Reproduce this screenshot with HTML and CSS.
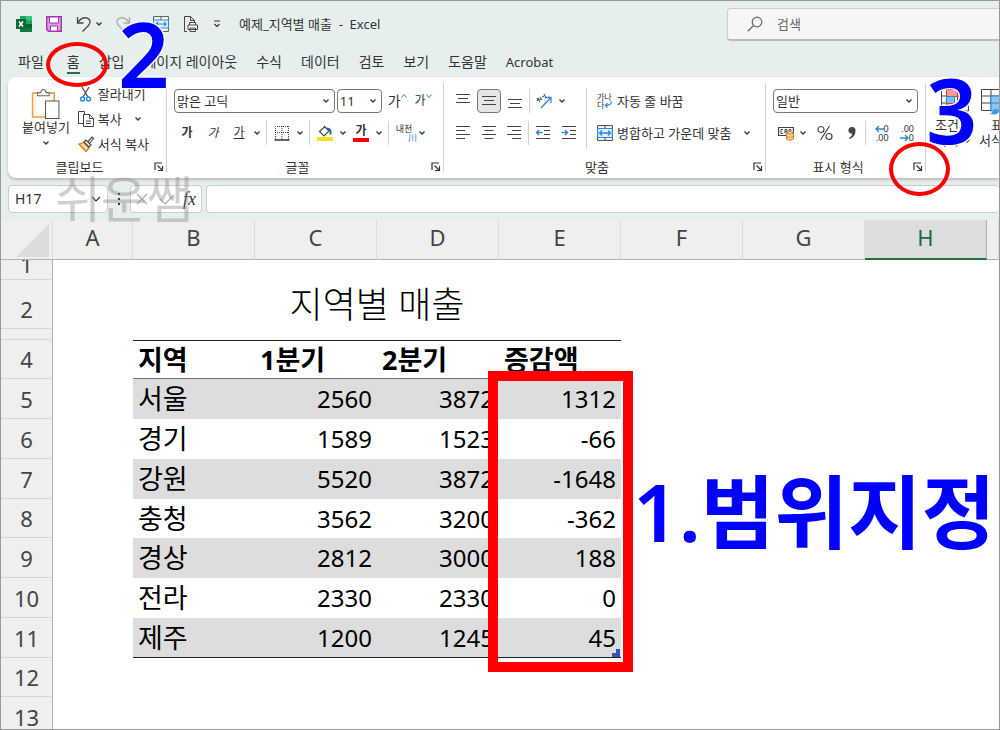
FILE: index.html
```html
<!DOCTYPE html>
<html lang="ko">
<head>
  <meta charset="UTF-8">
  <meta name="viewport" content="width=device-width, initial-scale=1.0">
  <title>예제_지역별 매출 - Excel</title>
  <link rel="stylesheet" href="styles.css">
</head>
<body>
  <svg class="defs" aria-hidden="true">
    <symbol id="chev" viewBox="0 0 8 8"><path d="M1.5 2.5 4 5l2.500-2.500" fill="none" stroke="#333" stroke-width="1.300"/></symbol>
    <symbol id="launch" viewBox="0 0 10 10"><path d="M1 8V1h7M3.500 3.500 8 8M8.500 4v4.500H4" fill="none" stroke="#333" stroke-width="1.200"/></symbol>
  </svg>

  <header class="titlebar">
    <div class="quick">
      <svg class="icon" viewBox="0 0 16 16"><path d="M4 0h12v16H4z" fill="#21a366"/><path d="M4 8h12v8H4z" fill="#107c41"/><path d="M10 0h6v4h-6z" fill="#33c481"/><path d="M10 8h6v4h-6z" fill="#185c37"/><path d="M0 3h10v10H0z" fill="#0e6b38"/><path d="m3 5.500 4 5M7 5.500l-4 5" stroke="#fff" stroke-width="1.500"/></svg>
      <button aria-label="저장"><svg class="icon" viewBox="0 0 16 16"><path d="M.7.700h14.600v14.600H2.500L.7 13.500z" fill="#dd9be4" stroke="#a237b0" stroke-width="1.400"/><path d="M3.500 1h9v6h-9zM4.500 10h7v5h-7z" fill="#fff" stroke="#a237b0"/></svg></button>
      <button class="undo" aria-label="실행 취소"><svg class="icon" viewBox="0 0 16 16"><path d="M1.500 1v6h6M1.500 7C4 3 7 1.500 10 1.800c4 .4 5.500 4.700 2.500 7.700L6.500 15.500" fill="none" stroke="#444" stroke-width="1.300"/></svg><svg class="chev"><use href="#chev"/></svg></button>
      <button class="redo" aria-label="다시 실행"><svg class="icon" viewBox="0 0 16 16"><path d="M14.500 1v6h-6M14.500 7C12 3 9 1.500 6 1.800c-4 .4-5.500 4.700-2.500 7.700l6 6" fill="none" stroke="#aaa" stroke-width="1.300"/></svg></button>
      <button aria-label="병합"><svg class="icon" viewBox="0 0 16 16"><path d="M.6.600h14.800v14.800H.6zM8 .6V4M8 12v3.400" fill="#fff" stroke="#555"/><path d="M.6 4h14.800v8H.6z" fill="#e3f1fc" stroke="#2b88d8"/><path d="M3 8h10M5 6 3 8l2 2M11 6l2 2-2 2" fill="none" stroke="#2b88d8" stroke-width="1.200"/></svg></button>
      <button aria-label="인쇄 미리 보기"><svg class="icon" viewBox="0 0 16 16"><path d="M4 15.500H1.500V.5h6l4 4V6M7.500.500v4h4" fill="none" stroke="#444"/><path d="M6.500 9V6.500h6V9M5 13.500v-4.500h9.500v4.500zM7 12h5.500v3.500H7z" fill="#fff" stroke="#444"/></svg></button>
      <button aria-label="사용자 지정"><svg class="chev" viewBox="0 0 8 8"><path d="M1 1h6M1.500 4 4 6.500 6.500 4" fill="none" stroke="#333" stroke-width="1.200"/></svg></button>
    </div>
    <h1 class="doc-name">예제_지역별 매출&nbsp; -&nbsp; Excel</h1>
    <label class="search">
      <svg class="icon" viewBox="0 0 16 16"><circle cx="10" cy="6" r="4.800" fill="none" stroke="#666" stroke-width="1.200"/><path d="M6.500 9.500.8 15.200" stroke="#666" stroke-width="1.300"/></svg>
      <input type="search" placeholder="검색" aria-label="검색">
    </label>
  </header>

  <nav class="tabs">
    <a href="#">파일</a>
    <a href="#" class="active">홈</a>
    <a href="#">삽입</a>
    <a href="#">페이지 레이아웃</a>
    <a href="#">수식</a>
    <a href="#">데이터</a>
    <a href="#">검토</a>
    <a href="#">보기</a>
    <a href="#">도움말</a>
    <a href="#" class="latin">Acrobat</a>
  </nav>

  <div class="ribbon">
    <section class="group clipboard">
      <div class="tools">
        <button class="big">
          <svg class="paste" viewBox="0 0 28 29"><path d="M1 4h21v23H1z" fill="#fff" stroke="#e8a33d" stroke-width="1.500"/><path d="M2.500 5.500h18v20h-18z" fill="#fdf3dc"/><path d="M4.500 7h14v17h-14z" fill="#fff"/><path d="M6 6.500v-3h3c0-4 5-4 5 0h3v3z" fill="#fff" stroke="#666"/><path d="M13.500 11.500h13v17h-13z" fill="#fff" stroke="#555"/></svg>
          <span>붙여넣기</span>
          <svg class="chev"><use href="#chev"/></svg>
        </button>
        <div class="stack">
          <button><svg class="icon" viewBox="0 0 16 16"><path d="M4 1l6 10M11 1 5 11" stroke="#444" stroke-width="1.200"/><circle cx="4.500" cy="13" r="2" fill="none" stroke="#2b88d8" stroke-width="1.400"/><circle cx="10.500" cy="13" r="2" fill="none" stroke="#2b88d8" stroke-width="1.400"/></svg>잘라내기</button>
          <button><svg class="icon" viewBox="0 0 16 16"><path d="M5 12.500H.5V.5h6V3" fill="none" stroke="#444"/><path d="M5.500 3.500h6l4 4v8h-10zM11.500 3.500v4h4M8 10h5M8 12.500h5" fill="#fff" stroke="#444"/></svg>복사<svg class="chev far"><use href="#chev"/></svg></button>
          <button><svg class="icon" viewBox="0 0 16 16"><path d="m1 8 5-1.500L11 12l-3 3.500z" fill="#fbd59b" stroke="#d9791a" stroke-width="1.300"/><path d="m6 6 2-2 5 5-2 2zM10 5.500 14 1l1.500 1.500L12 7" fill="#fff" stroke="#444" stroke-width="1.200"/></svg>서식 복사</button>
        </div>
      </div>
      <footer><span>클립보드</span><button aria-label="클립보드 옵션"><svg class="launch"><use href="#launch"/></svg></button></footer>
    </section>

    <section class="group font">
      <div class="tools rows">
        <div class="row">
          <label class="combo font-name"><select aria-label="글꼴 이름"><option>맑은 고딕</option></select><svg class="chev"><use href="#chev"/></svg></label>
          <label class="combo font-size"><select aria-label="글꼴 크기"><option>11</option></select><svg class="chev"><use href="#chev"/></svg></label>
          <button class="tool grow" aria-label="크게">가<svg class="caret" viewBox="0 0 6 4"><path d="m.5 3.500 2.500-3 2.500 3" fill="none" stroke="#2b88d8"/></svg></button>
          <button class="tool" aria-label="작게">가<svg class="caret" viewBox="0 0 6 4"><path d="m.5.500 2.500 3 2.500-3" fill="none" stroke="#2b88d8"/></svg></button>
        </div>
        <div class="row">
          <button class="tool bold">가</button>
          <button class="tool italic">가</button>
          <button class="tool under">가</button>
          <button class="drop" aria-label="밑줄 종류"><svg class="chev"><use href="#chev"/></svg></button>
          <i class="sep"></i>
          <button class="tool" aria-label="테두리"><svg class="icon" viewBox="0 0 16 16"><path d="M1 1.500h14M1 7.500h14M1.500 1v14M8 1v14M14.500 1v14" fill="none" stroke="#444" stroke-dasharray="1 1"/><path d="M.5 15h15" stroke="#333" stroke-width="1.500"/></svg></button>
          <button class="drop" aria-label="테두리 종류"><svg class="chev"><use href="#chev"/></svg></button>
          <i class="sep"></i>
          <button class="tool" aria-label="채우기 색"><svg class="icon" viewBox="0 0 16 16"><path d="m7 1 5 5-5 5-4.500-4.500L8 1.500" fill="#fff" stroke="#444" stroke-width="1.200"/><path d="M10 3.500c3 0 4 2 3.500 6" fill="none" stroke="#1b66b0" stroke-width="2"/><path d="M0 12h16v4H0z" fill="#ffe11a"/></svg></button>
          <button class="drop" aria-label="채우기 색 선택"><svg class="chev"><use href="#chev"/></svg></button>
          <button class="tool color">가</button>
          <button class="drop" aria-label="글꼴 색 선택"><svg class="chev"><use href="#chev"/></svg></button>
          <i class="sep"></i>
          <button class="tool phonetic"><span>내천</span><b>川</b></button>
          <button class="drop" aria-label="윗주"><svg class="chev"><use href="#chev"/></svg></button>
        </div>
      </div>
      <footer><span>글꼴</span><button aria-label="글꼴 옵션"><svg class="launch"><use href="#launch"/></svg></button></footer>
    </section>

    <section class="group align">
      <div class="tools">
        <div class="rows">
          <div class="row">
            <button class="tool" aria-label="위쪽 맞춤"><svg class="icon" viewBox="0 0 16 16"><path d="M1 1.500h14M3 5.500h10M1 9.500h14" stroke="#444" stroke-width="1.200"/></svg></button>
            <button class="tool on" aria-label="가운데 맞춤"><svg class="icon" viewBox="0 0 16 16"><path d="M1 3.500h14M3 7.500h10M1 11.500h14" stroke="#444" stroke-width="1.200"/></svg></button>
            <button class="tool" aria-label="아래쪽 맞춤"><svg class="icon" viewBox="0 0 16 16"><path d="M1 6.500h14M3 10.500h10M1 14.500h14" stroke="#444" stroke-width="1.200"/></svg></button>
            <i class="sep tight"></i>
            <button class="tool" aria-label="방향"><svg class="icon" viewBox="0 0 16 16"><path d="M5 15 14.500 5M9.500 4.500h5.500V10" fill="none" stroke="#2b88d8" stroke-width="1.300"/><path d="m1 5 3 4M1 8l2-3M4 4l2 3M6 4l2-1M8 1l2 4M3 7l2-1" fill="none" stroke="#444"/></svg></button>
            <button class="drop" aria-label="방향 선택"><svg class="chev"><use href="#chev"/></svg></button>
          </div>
          <div class="row">
            <button class="tool" aria-label="왼쪽"><svg class="icon" viewBox="0 0 16 16"><path d="M1 1.500h14M1 5.500h9M1 9.500h14M1 13.500h9" stroke="#444" stroke-width="1.200"/></svg></button>
            <button class="tool" aria-label="가운데"><svg class="icon" viewBox="0 0 16 16"><path d="M1 1.500h14M3.500 5.500h9M1 9.500h14M3.500 13.500h9" stroke="#444" stroke-width="1.200"/></svg></button>
            <button class="tool" aria-label="오른쪽"><svg class="icon" viewBox="0 0 16 16"><path d="M1 1.500h14M6 5.500h9M1 9.500h14M6 13.500h9" stroke="#444" stroke-width="1.200"/></svg></button>
            <i class="sep tight"></i>
            <button class="tool" aria-label="내어쓰기"><svg class="icon" viewBox="0 0 16 16"><path d="M1 1.500h14M9 5.500h6M9 9.500h6M1 13.500h14" stroke="#444" stroke-width="1.200"/><path d="M7.500 7.500H1.500M4 5 1.500 7.500 4 10" fill="none" stroke="#2b88d8" stroke-width="1.500"/></svg></button>
            <button class="tool" aria-label="들여쓰기"><svg class="icon" viewBox="0 0 16 16"><path d="M1 1.500h14M9 5.500h6M9 9.500h6M1 13.500h14" stroke="#444" stroke-width="1.200"/><path d="M.5 7.500h6M4 5 6.500 7.500 4 10" fill="none" stroke="#2b88d8" stroke-width="1.500"/></svg></button>
          </div>
        </div>
        <i class="sep tall"></i>
        <div class="rows">
          <button class="wide"><span class="wrap-icon" aria-hidden="true">가나<br>다<svg viewBox="0 0 9 8"><path d="M8 .5C8.500 4 6 5 1.500 5M4 2.500 1.500 5 4 7.500" fill="none" stroke="#2b88d8" stroke-width="1.400"/></svg></span>자동 줄 바꿈</button>
          <button class="wide"><svg class="icon" viewBox="0 0 16 16"><path d="M.6.600h14.800v14.800H.6zM8 .6V4M8 12v3.400" fill="#fff" stroke="#444"/><path d="M.6 3.500h14.800v9H.6z" fill="#e3f1fc" stroke="#2b88d8" stroke-width="1.200"/><path d="M2.500 8h11M5 5.500 2.500 8 5 10.500M11 5.500 13.500 8 11 10.500" fill="none" stroke="#2b88d8" stroke-width="1.300"/></svg>병합하고 가운데 맞춤<svg class="chev far"><use href="#chev"/></svg></button>
        </div>
      </div>
      <footer><span>맞춤</span><button aria-label="맞춤 옵션"><svg class="launch"><use href="#launch"/></svg></button></footer>
    </section>

    <section class="group number">
      <div class="tools rows">
        <label class="combo"><select aria-label="표시 형식"><option>일반</option></select><svg class="chev"><use href="#chev"/></svg></label>
        <div class="row">
          <button class="tool" aria-label="회계 형식"><svg class="icon" viewBox="0 0 16 16"><path d="M.6 2.500h14.800v8H.6z" fill="#fff" stroke="#444" stroke-width="1.200"/><path d="M5 4.500H3v4h2M7 8.500v-4h2v2H7M11 8.500v-4h2v2" fill="none" stroke="#444"/><path d="M8.500 8v6c1.500 1.500 5.500 1.500 7 0V8z" fill="#fbd59b" stroke="#d9791a"/><path d="M8.500 8c1.500 1.500 5.500 1.500 7 0-1.500-1.500-5.500-1.500-7 0M8.500 11c1.500 1.500 5.500 1.500 7 0" fill="#fff" stroke="#d9791a"/></svg></button>
          <button class="drop" aria-label="회계 형식 선택"><svg class="chev"><use href="#chev"/></svg></button>
          <button class="tool percent" aria-label="백분율"><svg class="icon" viewBox="0 0 16 16"><circle cx="4" cy="4.500" r="3" fill="none" stroke="#444" stroke-width="1.200"/><circle cx="12" cy="11.500" r="3" fill="none" stroke="#444" stroke-width="1.200"/><path d="M12.500 1 3.500 15" stroke="#444" stroke-width="1.200"/></svg></button>
          <button class="tool" aria-label="쉼표"><svg class="icon" viewBox="0 0 16 16"><path d="M8 2a3.300 3.300 0 0 1 3.500 3.800C11.500 10 9 13 5.500 14l-.5-1c2-1 3.200-2.500 3.200-4.200C2.800 8.500 3.500 2 8 2z" fill="#444"/></svg></button>
          <i class="sep tight"></i>
          <button class="tool decimals"><span><svg viewBox="0 0 9 8"><path d="M9 4H1M4 1 1 4l3 3" fill="none" stroke="#2b88d8" stroke-width="1.400"/></svg>0</span><span>.00</span></button>
          <button class="tool decimals"><span>.00</span><span><svg viewBox="0 0 9 8"><path d="M0 4h8M5 1l3 3-3 3" fill="none" stroke="#2b88d8" stroke-width="1.400"/></svg>0</span></button>
        </div>
      </div>
      <footer><span>표시 형식</span><button aria-label="표시 형식 옵션"><svg class="launch"><use href="#launch"/></svg></button></footer>
    </section>

    <section class="group styles">
      <div class="tools">
        <button class="big">
          <svg class="big-icon" viewBox="0 0 32 26"><path d="M4.500.500h23v20h-23zM4.500 7h23M4.500 14h23M11.500.500v20M20.500.500v20" fill="#fff" stroke="#444"/><path d="M9.500.500h11v7h-11z" fill="#ff9a9a" stroke="#e33"/><path d="M9.500 7.500h8v7h-8z" fill="#7cc0f0" stroke="#2b88d8"/><path d="M9.500 14.500h12v6h-12z" fill="#ff9a9a" stroke="#e33"/><path d="M22 12h9.500v10H22z" fill="#fff" stroke="#444"/></svg>
          <span>조건부</span>
          <span>서식 <svg class="chev"><use href="#chev"/></svg></span>
        </button>
        <button class="big">
          <svg class="big-icon" viewBox="0 0 32 26"><path d="M.5.500h30v21H.5zM.5 7h30M.5 14h30M10 .5v21M20 .5v21" fill="#fff" stroke="#444"/><path d="M10 7h21v15H10z" fill="#8cc5f2" stroke="#2b88d8"/><path d="M10 14h20M20 7v14" stroke="#2b88d8"/><path d="M8 25c4 0 3-5 7-5s4 5-1 5.500z" fill="#3f9be5"/></svg>
          <span>표</span>
          <span>서식 <svg class="chev"><use href="#chev"/></svg></span>
        </button>
      </div>
    </section>
  </div>

  <div class="formula-bar">
    <label class="name-box"><input value="H17" aria-label="이름 상자"><svg class="chev-lg" viewBox="0 0 10 10"><path d="m1 3 4 4 4-4" fill="none" stroke="#333" stroke-width="1.200"/></svg></label>
    <svg class="dots" viewBox="0 0 4 14"><path d="M1 1h2v2H1zM1 6h2v2H1zM1 11h2v2H1z" fill="#333"/></svg>
    <div class="fx">
      <button aria-label="취소"><svg class="icon" viewBox="0 0 16 16"><path d="m3 3 10 10M13 3 3 13" stroke="#aaa" stroke-width="1.200"/></svg></button>
      <button aria-label="입력"><svg class="icon" viewBox="0 0 16 16"><path d="m1 8 5 5 9-9" fill="none" stroke="#aaa" stroke-width="1.200"/></svg></button>
      <button class="fx-label">fx</button>
    </div>
    <input class="formula" aria-label="수식 입력줄">
  </div>

  <main class="sheet">
    <table>
      <colgroup><col class="c-head"><col class="c-a"><col class="c"><col class="c"><col class="c"><col class="c"><col class="c"><col class="c"><col class="c"><col></colgroup>
      <thead>
        <tr>
          <th class="corner"><svg viewBox="0 0 33 33"><path d="M33 0v33H0z" fill="#dcdcdc"/></svg></th>
          <th>A</th><th>B</th><th>C</th><th>D</th><th>E</th><th>F</th><th>G</th><th class="selected">H</th><th></th>
        </tr>
      </thead>
      <tbody>
        <tr class="r1"><th><div>1</div></th><td colspan="9"></td></tr>
        <tr class="r2"><th>2</th><td></td><td class="title" colspan="4">지역별 매출</td><td colspan="4"></td></tr>
        <tr class="r3"><th></th><td colspan="9"></td></tr>
        <tr class="head"><th>4</th><td></td><td>지역</td><td>1분기</td><td>2분기</td><td>증감액</td><td colspan="4"></td></tr>
        <tr class="data"><th>5</th><td></td><td>서울</td><td>2560</td><td>3872</td><td>1312</td><td colspan="4"></td></tr>
        <tr class="data"><th>6</th><td></td><td>경기</td><td>1589</td><td>1523</td><td>-66</td><td colspan="4"></td></tr>
        <tr class="data"><th>7</th><td></td><td>강원</td><td>5520</td><td>3872</td><td>-1648</td><td colspan="4"></td></tr>
        <tr class="data"><th>8</th><td></td><td>충청</td><td>3562</td><td>3200</td><td>-362</td><td colspan="4"></td></tr>
        <tr class="data"><th>9</th><td></td><td>경상</td><td>2812</td><td>3000</td><td>188</td><td colspan="4"></td></tr>
        <tr class="data"><th>10</th><td></td><td>전라</td><td>2330</td><td>2330</td><td>0</td><td colspan="4"></td></tr>
        <tr class="data last"><th>11</th><td></td><td>제주</td><td>1200</td><td>1245</td><td>45<i class="handle"></i></td><td colspan="4"></td></tr>
        <tr><th>12</th><td colspan="9"></td></tr>
        <tr><th>13</th><td colspan="9"></td></tr>
      </tbody>
    </table>
  </main>

  <div class="watermark">쉬운쌤</div>
  <div class="range-box"></div>
  <div class="ring ring-home"></div>
  <div class="ring ring-launch"></div>
  <div class="note note-1">1.범위지정</div>
  <div class="note note-2">2</div>
  <div class="note note-3">3</div>
</body>
</html>
```
FILE: styles.css
```css
* {
  box-sizing: border-box;
}
body {
  margin: 0;
  height: 100vh;
  display: flex;
  flex-direction: column;
  position: relative;
  overflow: hidden;
  border: 1px solid #999;
  background-color: #e6efee;
  color: #333;
  font-family: "Noto Sans", "Noto Sans CJK KR", sans-serif;
  font-size: 13px;
  line-height: 16px;
}
button, input, select {
  font: inherit;
  color: inherit;
  background: none;
  border: none;
  padding: 0;
  margin: 0;
}
button {
  display: flex;
  align-items: center;
  cursor: pointer;
  white-space: nowrap;
}
svg {
  display: block;
  flex: none;
}
.defs {
  position: absolute;
  width: 0;
  height: 0;
}
.icon {
  width: 16px;
  height: 16px;
}
.chev {
  width: 8px;
  height: 8px;
}

/* title bar */
.titlebar {
  display: flex;
  align-items: center;
  height: 46px;
  padding-left: 15px;
  flex: none;
}
.quick {
  display: flex;
  align-items: center;
  gap: 14px;
}
.undo {
  gap: 3px;
}
.redo {
  margin: 0 8px 0 -2px;
}
.doc-name {
  margin: 0 0 0 18px;
  font-size: 13px;
  font-weight: normal;
}
.search {
  display: flex;
  align-items: center;
  gap: 14px;
  width: 272px;
  height: 33px;
  margin-left: auto;
  padding-left: 19px;
  background-color: #f6f6f6;
  border: 1px solid #ccc;
  border-right: none;
  border-bottom: 2px solid #bbb;
  border-radius: 4px 0 0 4px;
}
.search input::placeholder {
  color: #666;
  opacity: 1;
}

/* tabs */
.tabs {
  display: flex;
  gap: 19px;
  height: 30px;
  padding: 5px 17px 0;
  font-size: 14px;
  line-height: 20px;
  flex: none;
}
.tabs a {
  color: #333;
  text-decoration: none;
  height: 22px;
}
.tabs .active {
  margin-left: 4px;
  border-bottom: 2px solid #217346;
}
.tabs .latin {
  font-size: 13px;
}

/* ribbon */
.ribbon {
  display: flex;
  height: 101px;
  margin-left: 7px;
  flex: none;
  overflow: hidden;
  background-color: #fff;
  border-radius: 8px 0 0 8px;
  box-shadow: 0 2px 3px #bbb;
}
.group {
  display: flex;
  flex-direction: column;
  justify-content: space-between;
  margin: 6px 0;
  padding: 6px 7px 0;
  border-right: 1px solid #d0d0d0;
  flex: none;
}
.clipboard { width: 159px; }
.font { width: 277px; }
.align { width: 322px; }
.number { width: 160px; }
.styles { border: none; }
.tools {
  display: flex;
}
.group footer {
  display: flex;
  align-items: center;
  height: 11px;
  margin-right: -5px;
}
.group footer span {
  flex: 1;
  padding-right: 10px;
  text-align: center;
}
.launch {
  width: 10px;
  height: 10px;
}
.rows {
  display: flex;
  flex-direction: column;
  gap: 8px;
}
.row {
  display: flex;
  align-items: center;
  height: 24px;
}
.combo {
  display: flex;
  align-items: center;
  height: 24px;
  padding: 0 4px 0 2px;
  border: 1px solid #777;
  border-radius: 4px;
}
.combo select {
  appearance: none;
  flex: 1;
  min-width: 0;
}
.font-name {
  width: 162px;
  margin-right: 2px;
}
.font-size {
  width: 46px;
  margin-right: 2px;
}
.tool {
  width: 26px;
  height: 24px;
  justify-content: center;
  font-size: 12px;
}
.drop {
  width: 10px;
  height: 24px;
  justify-content: center;
}
.tool.on {
  width: 24px;
  margin: 0 1px;
  background-color: #e6e6e6;
  border: 1px solid #777;
  border-radius: 4px;
}
.grow {
  font-size: 14px;
}
.caret {
  width: 6px;
  height: 4px;
  margin-bottom: 10px;
}
.bold { font-weight: bold; }
.italic { font-style: italic; }
.under { text-decoration: underline; }
.color {
  font-weight: bold;
  height: 17px;
  width: 16px;
  margin: 0 5px;
  border-bottom: 4px solid #f00;
}
.phonetic {
  flex-direction: column;
  align-items: center;
  font-size: 9px;
  line-height: 9px;
}
.phonetic b {
  align-self: flex-end;
  font-weight: normal;
  color: #2b88d8;
}
.sep {
  width: 1px;
  height: 24px;
  margin: 0 2px 0 4px;
  background-color: #d0d0d0;
}
.sep.tight {
  margin: 0 1px;
}
.sep.tall {
  height: 60px;
  margin: 0 10px 0 4px;
}
.align .tools {
  margin-left: -1px;
}
.align .rows:first-child {
  width: 132px;
}
.wide {
  height: 24px;
  gap: 4px;
}
.far {
  margin-left: 8px;
}
.wrap-icon {
  width: 16px;
  font-size: 8px;
  line-height: 8px;
  text-align: left;
}
.wrap-icon svg {
  display: inline-block;
  width: 8px;
  height: 7px;
}
.percent {
  margin: 0 2px 0 4px;
}
.decimals {
  flex-direction: column;
  align-items: flex-end;
  padding-right: 4px;
  font-size: 9px;
  line-height: 9px;
}
.decimals span {
  display: flex;
  align-items: center;
}
.decimals svg {
  width: 9px;
  height: 8px;
}

.clipboard .tools {
  gap: 8px;
  padding-left: 7px;
}
.big {
  flex-direction: column;
  line-height: 15px;
}
.big span {
  display: flex;
  align-items: center;
  gap: 4px;
}
.paste {
  width: 30px;
  height: 30px;
  margin-bottom: 1px;
}
.paste ~ span {
  margin-bottom: 4px;
}
.stack {
  display: flex;
  flex-direction: column;
  gap: 9px;
  margin-top: -3px;
}
.stack button {
  gap: 4px;
  height: 16px;
}
.styles .tools {
  gap: 8px;
  padding-left: 2px;
}
.big-icon {
  width: 32px;
  height: 26px;
  margin-bottom: 3px;
}

/* formula bar */
.formula-bar {
  display: flex;
  align-items: center;
  height: 42px;
  padding: 0 0 0 7px;
  flex: none;
}
.name-box, .fx, .formula {
  height: 28px;
  background-color: #fff;
  border: 1px solid #ccc;
  border-radius: 4px;
}
.name-box {
  display: flex;
  align-items: center;
  justify-content: space-between;
  width: 100px;
  padding: 0 6px;
}
.name-box input {
  width: 60px;
  font-size: 14px;
}
.chev-lg {
  width: 10px;
  height: 10px;
}
.dots {
  width: 4px;
  height: 14px;
  margin: 0 9px;
}
.fx {
  display: flex;
  align-items: center;
  justify-content: space-between;
  width: 72px;
  padding: 0 5px 0 3px;
  margin-right: 4px;
}
.fx-label {
  font-family: "Liberation Serif", serif;
  font-style: italic;
  font-size: 18px;
}
.formula {
  flex: 1;
  border-right: none;
}

/* worksheet */
.sheet {
  flex: 1;
  min-height: 0;
  overflow: hidden;
  background-color: #fff;
}
table {
  width: 100%;
  table-layout: fixed;
  border-spacing: 0;
  line-height: 30px;
}
.c-head { width: 52px; }
.c-a { width: 80px; }
.c { width: 122px; }
th, td {
  padding: 0;
}
th {
  font-weight: normal;
  font-size: 22px;
  color: #444;
  background-color: #efefef;
}
thead th {
  height: 40px;
  padding-bottom: 5px;
  border-right: 1px solid #dcdcdc;
  border-bottom: 1px solid #b0b0b0;
}
thead .corner {
  padding: 3px 3px 2px;
}
.corner svg {
  width: 33px;
  height: 33px;
  margin-left: auto;
}
thead .selected {
  color: #1b6b43;
  background-color: #ddd;
  border-right-color: #b0b0b0;
  border-bottom: 2px solid #217346;
}
tbody th {
  border-right: 1px solid #b0b0b0;
  border-bottom: 1px solid #d4d4d4;
}
tbody tr {
  height: 40px;
}
tbody tr:nth-child(4n) {
  height: 39px;
}
tbody .r1 {
  height: 20px;
}
.r1 div {
  display: flex;
  align-items: flex-end;
  justify-content: center;
  height: 19px;
  overflow: hidden;
}
tbody .r2 {
  height: 49px;
}
.r2 th {
  padding-top: 10px;
}
tbody .r3 {
  height: 11px;
}
.title {
  text-align: center;
  font-size: 36px;
  font-weight: 300;
  color: #000;
}
.head td, .data td {
  padding: 0 5px;
  font-size: 27px;
  color: #000;
}
.head td:nth-child(n+3):nth-child(-n+6) {
  font-weight: bold;
  border-top: 1px solid #222;
  border-bottom: 1px solid #777;
}
.data td:nth-child(n+4) {
  position: relative;
  text-align: right;
  font-size: 24px;
}
.data:nth-child(odd) td:nth-child(n+3):nth-child(-n+6) {
  background-color: #ddd;
}
.last td:nth-child(n+3):nth-child(-n+6) {
  border-bottom: 1px solid #222;
}
.handle {
  position: absolute;
  right: 1px;
  bottom: 0;
  width: 8px;
  height: 8px;
  background-color: #3b54b4;
  clip-path: polygon(50% 0, 100% 0, 100% 100%, 0 100%, 0 50%, 50% 50%);
}

/* notes drawn over the window */
.note, .ring, .range-box, .watermark {
  position: absolute;
  pointer-events: none;
}
.note {
  color: #00f;
  font-weight: 600;
  font-size: 90px;
  line-height: 90px;
  white-space: nowrap;
  text-shadow: 1px 1px 0 #fff, -1px -1px 0 #fff, 1px -1px 0 #fff, -1px 1px 0 #fff;
}
.note-1 {
  left: 632px;
  top: 465px;
  font-size: 80px;
}
.note-2 {
  left: 117px;
  top: 7px;
}
.note-3 {
  left: 925px;
  top: 63px;
}
.ring {
  border: 4px solid #f00;
  border-radius: 50%;
}
.ring-home {
  left: 45px;
  top: 41px;
  width: 62px;
  height: 45px;
}
.ring-launch {
  left: 888px;
  top: 141px;
  width: 61px;
  height: 54px;
}
.range-box {
  left: 487px;
  top: 370px;
  width: 145px;
  height: 301px;
  border: 10px solid #f00;
}
.watermark {
  left: 54px;
  top: 170px;
  font-size: 50px;
  line-height: 56px;
  font-weight: 400;
  color: #888;
  opacity: 0.4;
}
```
